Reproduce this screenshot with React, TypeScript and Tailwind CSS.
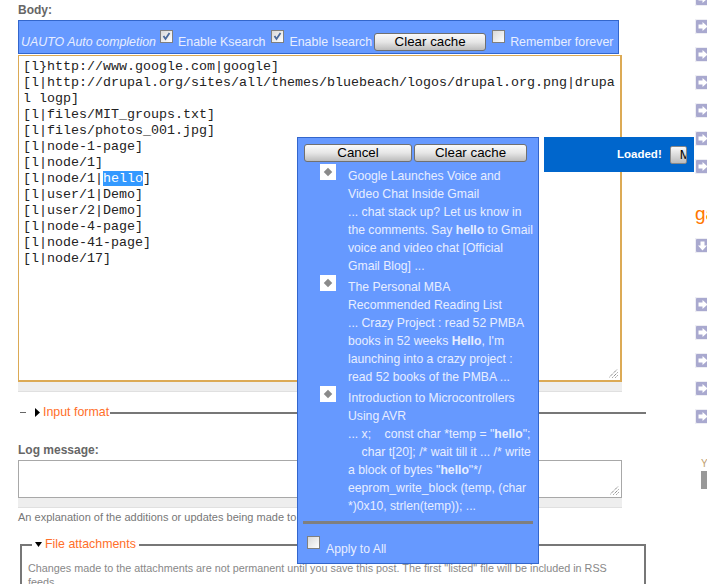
const sans = "font-['Liberation_Sans',Arial,sans-serif]";

const CheckBox = ({ checked, className }: { checked?: boolean; className?: string }) => (
  <span className={`block shrink-0 w-[13px] h-[13px] border border-solid border-[#7f7f7f] bg-gradient-to-br from-[#d8d8d8] to-white ${className ?? ""}`}>
    {checked && (
      <svg viewBox="0 0 11 11" className="w-[11px] h-[11px] block">
        <path d="M2.5 5 L4.5 8 L8.5 2" fill="none" stroke="#4a6a9c" strokeWidth="1.8" />
      </svg>
    )}
  </span>
);

const Btn = ({ label, className }: { label: string; className: string }) => (
  <button className={`h-[18px] rounded-[3px] border border-solid border-[#707070] bg-gradient-to-b from-[#fafafa] via-[#e6e6e6] to-[#bcbcbc] text-black text-[13.33px] leading-[16px] text-center shrink-0 ${className}`}>
    {label}
  </button>
);

const Arrow = ({ down }: { down?: boolean }) => (
  <div className="w-[15px] h-[15px] bg-[#eeeef4] p-px shrink-0">
    <svg viewBox="0 0 13 13" className="w-[13px] h-[13px] block">
      <rect width="13" height="13" rx="1" fill="#a9a9cf" />
      {down ? (
        <path d="M4.5 2.5h4v4h2.5l-4.5 5-4.5-5h2.5z" fill="#fff" />
      ) : (
        <path d="M2.5 4.5h4v-2.5l5 4.5-5 4.5v-2.5h-4z" fill="#fff" />
      )}
    </svg>
  </div>
);

const Grip = () => (
  <svg viewBox="0 0 9 9" className="absolute right-[2px] bottom-[2px] w-[9px] h-[9px]">
    <path d="M0 8.5 L8 0.5 M3.5 8.5 L8.5 3.5 M6.5 8.5 L8.5 6.5" stroke="#555" strokeDasharray="1 1" fill="none" />
  </svg>
);

const Bullet = () => (
  <div className="w-4 h-4 bg-white flex items-center justify-center shrink-0">
    <div className="w-[6px] h-[6px] rotate-45 bg-[#8a8a8a]" />
  </div>
);

const Result = ({ title, children }: { title: string[]; children: React.ReactNode }) => (
  <div className="flex pl-[22px] mb-[3px]">
    <div className="w-[28px] -mt-[3px] shrink-0"><Bullet /></div>
    <div className="w-[190px] whitespace-nowrap">
      {title.map((t) => <div key={t}>{t}</div>)}
      {children}
    </div>
  </div>
);

const lines = [
  "[l}http://www.google.com|google]",
  "[l|http://drupal.org/sites/all/themes/bluebeach/logos/drupal.org.png|drupa",
  "l logp]",
  "[l|files/MIT_groups.txt]",
  "[l|files/photos_001.jpg]",
  "[l|node-1-page]",
  "[l|node/1]",
];
const lines2 = ["[l|user/1|Demo]", "[l|user/2|Demo]", "[l|node-4-page]", "[l|node-41-page]", "[l|node/17]"];

export default function App() {
  return (
    <div className={`${sans} relative w-[707px] h-[584px] overflow-hidden bg-white flex text-[12px] text-[#666]`}>
      {/* main column */}
      <div className="w-[695px] shrink-0 pl-[18px] pt-[3px]">
        <div className="font-bold text-[#666] leading-[15px] h-[17px]">Body:</div>

        <div className="w-[601px] h-[34px] bg-[#6699ff] border border-solid border-[#3366cc] text-[12.4px] leading-[16px] text-[#e8eeff] flex items-end pb-[3px] pl-[2px] whitespace-nowrap">
          <i>UAUTO Auto completion</i>
          <CheckBox checked className="ml-[4px] mb-[7px]" />
          <span className="ml-[5px]">Enable Ksearch</span>
          <CheckBox checked className="ml-[6px] mb-[7px]" />
          <span className="ml-[5px]">Enable Isearch</span>
          <Btn label="Clear cache" className="w-[112px] ml-[2px] -mb-px" />
          <CheckBox className="ml-[6px] mb-[7px]" />
          <span className="ml-[5px]">Remember forever</span>
        </div>

        <div className="relative w-[604px] h-[327px] mt-[1px] border border-solid border-[#dcaa55] border-b-2 border-r-2 pl-[4px] pt-[3px] font-['Liberation_Mono','Courier_New',monospace] text-[13.33px] leading-[16px] text-[#222] whitespace-pre">
          {lines.map((l) => <div key={l}>{l}</div>)}
          <div>[l|node/1|<span className="bg-[#3399ff] text-white">hello</span>]</div>
          {lines2.map((l) => <div key={l}>{l}</div>)}
          <Grip />
        </div>
        <div className="w-[604px] h-[10px] bg-[#eeeeee] border-b border-solid border-[#e0e0e0]" />

        <div className="w-[628px] flex items-center mt-[12px] h-[17px] text-[12.4px]">
          <div className="w-[6px] h-px bg-[#666] ml-[2px]" />
          <svg viewBox="0 0 5 9" className="w-[5px] h-[9px] ml-[9px]"><path d="M0 0 L5 4.5 L0 9z" fill="#000" /></svg>
          <span className="ml-[3px] text-[#ff6f2a]">Input format</span>
          <div className="flex-1 h-[2px] bg-[#777] ml-px" />
        </div>

        <div className="font-bold leading-[15px] mt-[22px]">Log message:</div>
        <div className="relative w-[604px] h-[38px] mt-[2px] border border-solid border-[#a8a8a8]">
          <Grip />
        </div>
        <div className="w-[604px] h-[10px] bg-[#eeeeee] border-b border-solid border-[#e0e0e0]" />
        <div className="text-[11px] leading-[14px] mt-[2px] text-[#777] whitespace-nowrap">An explanation of the additions or updates being made to help other authors understand your motivations.</div>

        <div className="relative w-[626px] h-[60px] ml-[2px] mt-[20px] border-2 border-solid border-b-0 border-[#777] pt-[15px] pl-[6px] text-[10.8px] text-[#888] leading-[14px] whitespace-nowrap">
          <div className="absolute -top-[10px] left-[10px] px-[3px] bg-white flex items-center text-[12.4px] text-[#ff6f2a] leading-[16px]">
            <svg viewBox="0 0 7 5" className="w-[7px] h-[5px] mr-[3px]"><path d="M0 0 L7 0 L3.5 5z" fill="#000" /></svg>
            File attachments
          </div>
          Changes made to the attachments are not permanent until you save this post. The first "listed" file will be included in RSS
          <br />
          feeds.
        </div>
      </div>

      {/* right column, clipped by the window */}
      <div className="flex-1 min-w-0 overflow-hidden -mt-[9px]">
        <div className="flex flex-col gap-[13px]">
          {[0, 1, 2, 3, 4, 5, 6].map((i) => <Arrow key={i} />)}
        </div>
        <div className="text-[#ff7700] text-[19px] leading-[22px] mt-[29px]">ga</div>
        <div className="mt-[13px]"><Arrow down /></div>
        <div className="flex flex-col gap-[13px] mt-[44px]">
          {[0, 1, 2, 3, 4].map((i) => <Arrow key={i} />)}
        </div>
        <div className="ml-[6px] mt-[34px] text-[10px] leading-[12px] text-[#c0a070]">Y</div>
        <div className="ml-[6px] mt-px h-[18px] bg-[#999]" />
      </div>

      {/* Loaded! bar */}
      <div className="absolute left-[544px] top-[137px] w-[150px] h-[35px] bg-[#0066cc] flex items-center overflow-hidden text-white text-[11.5px] font-bold">
        <span className="ml-[73px]">Loaded!</span>
        <div className="w-[17px] h-[18px] ml-[8px] rounded-[2px] border border-solid border-[#888] bg-gradient-to-b from-[#fafafa] to-[#bcbcbc] overflow-hidden pl-[9px] text-black font-normal text-[13px] leading-[16px]">M</div>
      </div>

      {/* results popup */}
      <div className="absolute left-[297px] top-[137px] w-[242px] h-[427px] bg-[#6699ff] border border-solid border-[#3366cc] text-[12.2px] leading-[18px] text-[#e8eeff]">
        <div className="flex gap-[2px] pl-[6px] pt-[6px] mb-[5px]">
          <Btn label="Cancel" className="w-[108px]" />
          <Btn label="Clear cache" className="w-[113px]" />
        </div>
        <Result title={["Google Launches Voice and", "Video Chat Inside Gmail"]}>
          <div>... chat stack up? Let us know in</div>
          <div>the comments. Say <b>hello</b> to Gmail</div>
          <div>voice and video chat [Official</div>
          <div>Gmail Blog] ...</div>
        </Result>
        <Result title={["The Personal MBA", "Recommended Reading List"]}>
          <div>... Crazy Project : read 52 PMBA</div>
          <div>books in 52 weeks <b>Hello</b>, I'm</div>
          <div>launching into a crazy project :</div>
          <div>read 52 books of the PMBA ...</div>
        </Result>
        <Result title={["Introduction to Microcontrollers", "Using AVR"]}>
          <div className="whitespace-pre">... x;    const char *temp = "<b>hello</b>";</div>
          <div className="whitespace-pre">    char t[20]; /* wait till it ... /* write</div>
          <div>a block of bytes "<b>hello</b>"*/</div>
          <div>eeprom_write_block (temp, (char</div>
          <div>*)0x10, strlen(temp)); ...</div>
        </Result>
        <div className="h-[3px] bg-[#7f7f7f] mx-[5px] mt-[6px]" />
        <div className="flex pl-[9px] mt-[12px]">
          <CheckBox />
          <span className="ml-[6px] mt-[4px]">Apply to All</span>
        </div>
      </div>
    </div>
  );
}
